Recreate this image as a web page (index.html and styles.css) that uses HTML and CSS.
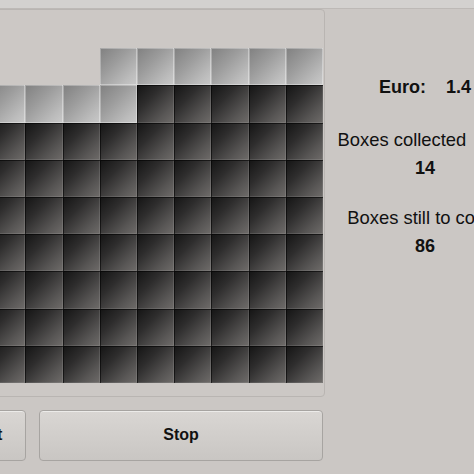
FILE: index.html
```html
<!DOCTYPE html>
<html lang="en">
<head>
  <meta charset="UTF-8">
  <meta name="viewport" content="width=device-width, initial-scale=1.0">
  <title>Bomb Risk Task</title>
  <link rel="stylesheet" href="styles.css">
</head>
<body>

  <div class="topbar"></div>

  <div class="app">
    <div class="game">
      <div class="board">
        <div class="grid" id="grid"></div>
      </div>
      <div class="controls">
        <button class="btn start">Start</button>
        <button class="btn stop">Stop</button>
      </div>
    </div>

    <div class="side">
      <div class="euro">
        <span>Euro:</span>
        <span>1.4</span>
      </div>
      <div class="stat">
        <div class="label first">Boxes collected&ensp;so far</div>
        <div class="value">14</div>
      </div>
      <div class="stat">
        <div class="label second">Boxes still to collect</div>
        <div class="value">86</div>
      </div>
    </div>
  </div>

  <script>
    const grid = document.getElementById('grid');
    const collected = 14;
    const queued = 11;

    for (let i = 0; i < 100; i++) {
      const box = document.createElement('div');
      box.className = 'box';
      if (i < collected) {
        box.classList.add('done');
      } else if (i < collected + queued) {
        box.classList.add('hi');
      }
      grid.appendChild(box);
    }
  </script>

</body>
</html>
```

FILE: styles.css
```css
body {
  margin: 0;
  padding: 0;
  overflow: hidden;
  background-color: #cbc7c4;
  font-family: "Liberation Sans", Arial, sans-serif;
  color: #111;
}

.topbar {
  height: 8px;
  background: #d3d1cf;
  border-bottom: 1px solid #bdb9b6;
}

.app {
  display: flex;
  margin-left: -51px;
}

.game {
  flex: 0 0 376px;
}

.board {
  border: 1px solid #b9b5b2;
  border-radius: 4px;
  padding: 1px 1px 13px 1px;
  background: #ccc8c5;
}

.grid {
  display: grid;
  grid-template-columns: repeat(10, 37.2px);
  grid-template-rows: repeat(10, 37.2px);
}

.box {
  background: linear-gradient(135deg, #141414 0%, #2e2d2d 35%, #585655 75%, #6f6c6a 100%);
  box-shadow: inset 1px 1px 0 rgba(0, 0, 0, 0.55), inset -1px -1px 0 rgba(255, 255, 255, 0.1);
}

.box.hi {
  background: linear-gradient(135deg, #808080 0%, #9c9c9c 40%, #bcbcbc 80%, #c9c9c9 100%);
  box-shadow: inset 1px 1px 0 rgba(255, 255, 255, 0.3), inset -1px -1px 0 rgba(255, 255, 255, 0.35);
}

.box.done {
  background: none;
  box-shadow: none;
}

.controls {
  display: flex;
  gap: 13px;
  margin: 13px 2px 0 0;
}

.btn {
  height: 51px;
  border: 1px solid #a7a4a1;
  border-radius: 4px;
  background: linear-gradient(#d9d6d3, #c9c6c3);
  box-shadow: inset 0 1px 0 rgba(255, 255, 255, 0.5);
  font-family: inherit;
  font-size: 16px;
  font-weight: bold;
  color: #111;
  padding: 0;
}

.start {
  flex: 0 0 77px;
  padding-right: 7px;
}

.stop {
  flex: 1;
}

.side {
  flex: 0 0 200px;
  padding-top: 68px;
  text-align: center;
  font-size: 18px;
  line-height: 20px;
  white-space: nowrap;
}

.euro {
  display: flex;
  justify-content: center;
  gap: 20px;
  font-weight: bold;
  margin-bottom: 33px;
}

.stat {
  margin-bottom: 30px;
}

.stat .label {
  font-size: 18.4px;
  margin-bottom: 8px;
}

.stat .label.first {
  padding-left: 9px;
}

.stat .label.second {
  padding-left: 5px;
}

.stat .value {
  font-weight: bold;
}
```
